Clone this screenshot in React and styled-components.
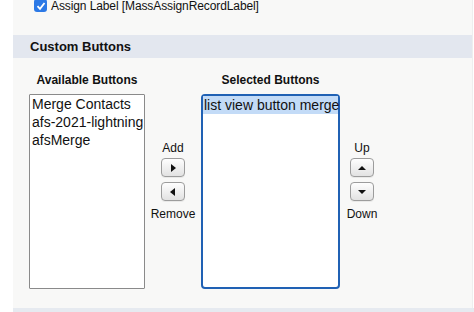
import React from "react";
import styled, { createGlobalStyle } from "styled-components";

const GlobalStyle = createGlobalStyle`
  body {
    margin: 0;
    background: #ffffff;
    font-family: "Liberation Sans", Arial, sans-serif;
    color: #000;
  }
`;

const Page = styled.div`
  width: 474px;
  height: 312px;
  overflow: hidden;
  background: #ffffff;
`;

const Panel = styled.div`
  margin-left: 13px;
  width: 459px;
  height: 308px;
  background: #f8f8f7;
  border-right: 1px solid #eeeeee;
  overflow: hidden;
`;

const BottomBar = styled.div`
  height: 4px;
  margin-left: 13px;
  background: #e6eaf0;
`;

const CheckRow = styled.div`
  display: flex;
  align-items: center;
  gap: 4px;
  margin-top: -2px;
  padding-left: 21px;
  height: 15px;
  font-size: 12px;
  letter-spacing: -0.1px;
  color: #111;
`;

const CheckBox = styled.span`
  width: 13px;
  height: 13px;
  border-radius: 3px;
  background: #2c79e6;
  display: flex;
  align-items: center;
  justify-content: center;
`;

const SectionHeader = styled.div`
  margin-top: 22px;
  height: 23px;
  background: #e3e7ef;
  display: flex;
  align-items: center;
  padding-left: 17px;
  font-size: 13px;
  font-weight: bold;
  color: #111;
`;

const Body = styled.div`
  display: flex;
  padding: 15px 0 0 16px;
`;

const ListColumn = styled.div`
  display: flex;
  flex-direction: column;
  align-items: center;
  width: ${(p) => p.$width}px;
`;

const ColumnTitle = styled.div`
  font-size: 12px;
  font-weight: bold;
  line-height: 14px;
  margin-bottom: 7px;
  color: #111;
  white-space: nowrap;
`;

const ListBox = styled.div`
  box-sizing: border-box;
  width: 100%;
  height: 195px;
  background: #fff;
  border: ${(p) => (p.$focused ? "2px solid #2061b4" : "1px solid #8a8a8a")};
  border-radius: ${(p) => (p.$focused ? "4px" : "1px")};
  padding: ${(p) => (p.$focused ? "0" : "0 2px")};
  font-size: 14px;
  line-height: 18px;
`;

const ListItem = styled.div`
  white-space: nowrap;
  padding: 0 ${(p) => (p.$selected ? "1px" : "0")};
  background: ${(p) => (p.$selected ? "#c3dbf7" : "transparent")};
  color: #111;
`;

const MoveColumn = styled.div`
  width: ${(p) => p.$width}px;
  display: flex;
  flex-direction: column;
  align-items: center;
  padding-top: 68px;
`;

const MoveLabel = styled.div`
  font-size: 12px;
  line-height: 14px;
  color: #111;
  margin: ${(p) => (p.$bottom ? "3px 0 0" : "0 0 1px")};
`;

const MoveButton = styled.button`
  box-sizing: border-box;
  flex: none;
  width: 24px;
  height: 19px;
  margin: 2px 0 3px;
  padding: 0;
  border: 1px solid #9c9c9c;
  border-radius: 4px;
  background: linear-gradient(#fefefe, #e2e2e2);
  box-shadow: 0 1px 0 rgba(0, 0, 0, 0.06);
  display: flex;
  align-items: center;
  justify-content: center;
`;

const Arrow = ({ dir }) => {
  const pts = {
    right: "3,1 8,5 3,9",
    left: "7,1 2,5 7,9",
    up: "1,7 5,3 9,7",
    down: "1,3 5,7 9,3",
  }[dir];
  return (
    <svg width="10" height="10" viewBox="0 0 10 10">
      <polygon points={pts} fill="#111" />
    </svg>
  );
};

const available = ["Merge Contacts", "afs-2021-lightning", "afsMerge"];
const selected = ["list view button merge"];

export default function App() {
  return (
    <>
      <GlobalStyle />
      <Page>
        <Panel>
          <CheckRow>
            <CheckBox>
              <svg width="10" height="10" viewBox="0 0 10 10">
                <polyline
                  points="1.5,5.2 4,7.8 8.5,2"
                  fill="none"
                  stroke="#fff"
                  strokeWidth="1.8"
                />
              </svg>
            </CheckBox>
            Assign Label [MassAssignRecordLabel]
          </CheckRow>
          <SectionHeader>Custom Buttons</SectionHeader>
          <Body>
            <ListColumn $width={116}>
              <ColumnTitle>Available Buttons</ColumnTitle>
              <ListBox>
                {available.map((item) => (
                  <ListItem key={item}>{item}</ListItem>
                ))}
              </ListBox>
            </ListColumn>
            <MoveColumn $width={56}>
              <MoveLabel>Add</MoveLabel>
              <MoveButton>
                <Arrow dir="right" />
              </MoveButton>
              <MoveButton>
                <Arrow dir="left" />
              </MoveButton>
              <MoveLabel $bottom>Remove</MoveLabel>
            </MoveColumn>
            <ListColumn $width={139}>
              <ColumnTitle>Selected Buttons</ColumnTitle>
              <ListBox $focused>
                {selected.map((item) => (
                  <ListItem key={item} $selected>
                    {item}
                  </ListItem>
                ))}
              </ListBox>
            </ListColumn>
            <MoveColumn $width={44}>
              <MoveLabel>Up</MoveLabel>
              <MoveButton>
                <Arrow dir="up" />
              </MoveButton>
              <MoveButton>
                <Arrow dir="down" />
              </MoveButton>
              <MoveLabel $bottom>Down</MoveLabel>
            </MoveColumn>
          </Body>
        </Panel>
        <BottomBar />
      </Page>
    </>
  );
}
